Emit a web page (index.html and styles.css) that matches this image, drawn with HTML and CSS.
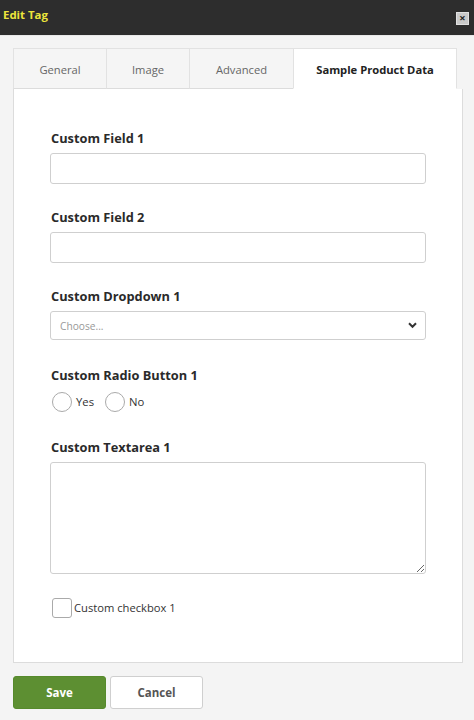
FILE: index.html
```html
<!DOCTYPE html>
<html>
<head>
<meta charset="utf-8">
<link rel="stylesheet" href="styles.css">
</head>
<body>
<div class="header">
  <span class="title">Edit Tag</span>
  <span class="close">&times;</span>
</div>
<div class="main">
  <div class="tabs">
    <div class="tab t1">General</div>
    <div class="tab t2">Image</div>
    <div class="tab t3">Advanced</div>
    <div class="tab t4 active">Sample Product Data</div>
  </div>
  <div class="panel">
    <label class="lbl">Custom Field 1</label>
    <input class="field" type="text">
    <label class="lbl">Custom Field 2</label>
    <input class="field" type="text">
    <label class="lbl">Custom Dropdown 1</label>
    <div class="select">
      <span class="placeholder">Choose...</span>
      <svg class="chev" width="9" height="7" viewBox="0 0 9 7"><path d="M1 1.3 L4.5 4.8 L8 1.3" fill="none" stroke="#333" stroke-width="2"/></svg>
    </div>
    <label class="lbl">Custom Radio Button 1</label>
    <div class="radios">
      <span class="radio"></span><span class="rtext">Yes</span>
      <span class="radio"></span><span class="rtext">No</span>
    </div>
    <label class="lbl">Custom Textarea 1</label>
    <textarea class="area"></textarea>
    <div class="check">
      <span class="box"></span><span class="ctext">Custom checkbox 1</span>
    </div>
  </div>
  <div class="buttons">
    <button class="btn save">Save</button>
    <button class="btn cancel">Cancel</button>
  </div>
</div>
</body>
</html>
```
FILE: styles.css
```css
* { box-sizing: border-box; }
html, body { margin: 0; padding: 0; }
body {
  background: #f4f4f4;
  font-family: "Open Sans", "Noto Sans", sans-serif;
  width: 474px;
  height: 720px;
  overflow: hidden;
}
.header {
  height: 36px;
  background: #2d2d2d;
  display: flex;
  align-items: center;
  justify-content: space-between;
  padding: 0 5px 0 3px;
  border-bottom: 1px solid #e8e8e8;
}
.title {
  color: #ece53c;
  font-size: 11.4px;
  font-weight: 700;
  margin-top: -6px;
}
.close {
  width: 13px;
  height: 13px;
  background: #c9c9c9;
  border: 1px solid #e0e0e0;
  color: #222;
  font-size: 11px;
  font-weight: 700;
  line-height: 10px;
  text-align: center;
  margin-top: 2px;
}
.main {
  padding: 12px 11px 0 13px;
}
.tabs {
  display: flex;
  height: 41px;
}
.tab {
  height: 41px;
  border: 1px solid #e2e2e2;
  border-right: none;
  border-bottom: 1px solid #dcdcdc;
  background: #f5f5f5;
  color: #666;
  font-size: 11.2px;
  display: flex;
  align-items: center;
  justify-content: center;
  padding-top: 1px;
}
.t1 { width: 93px; }
.t2 { width: 83px; }
.t3 { width: 104px; }
.t4 { width: 164px; border-right: 1px solid #e2e2e2; }
.tab.active {
  background: #fff;
  color: #222;
  font-weight: 700;
  border-bottom: 1px solid #fff;
}
.panel {
  background: #fff;
  border: 1px solid #dcdcdc;
  border-top: none;
  height: 574px;
  padding: 40px 36px 0 36px;
  display: flex;
  flex-direction: column;
  align-items: stretch;
}
.lbl {
  font-size: 12.8px;
  font-weight: 700;
  color: #2a2a2a;
  line-height: 18px;
  margin-bottom: 6px;
  padding-left: 1px;
}
.field {
  height: 31px;
  border: 1px solid #cfcfcf;
  border-radius: 3px;
  margin: 0 0 24px 0;
  padding: 0 8px;
  font-family: inherit;
  background: #fff;
}
.select {
  height: 29px;
  border: 1px solid #cfcfcf;
  border-radius: 3px;
  display: flex;
  align-items: center;
  justify-content: space-between;
  padding: 0 8px 0 9px;
  margin-bottom: 26px;
}
.placeholder {
  color: #999;
  font-size: 10.2px;
}
.chev { display: block; }
.radios {
  display: flex;
  align-items: center;
  margin-top: 1px;
  margin-bottom: 26px;
  padding-left: 2px;
  height: 21px;
}
.radio {
  width: 20px;
  height: 20px;
  border: 1.5px solid #aaa;
  border-radius: 50%;
  background: #fff;
}
.rtext {
  font-size: 11.3px;
  color: #333;
  margin-left: 4px;
  margin-right: 11px;
}
.area {
  height: 112px;
  border: 1px solid #cfcfcf;
  border-radius: 3px;
  margin: 0 0 23px 0;
  font-family: inherit;
  resize: both;
}
.check {
  display: flex;
  align-items: center;
  padding-left: 2px;
  height: 21px;
}
.box {
  width: 20px;
  height: 20px;
  border: 1.5px solid #aaa;
  border-radius: 3px;
  background: #fff;
}
.ctext {
  font-size: 11.2px;
  color: #333;
  margin-left: 2px;
}
.buttons {
  display: flex;
  gap: 4px;
  margin-top: 13px;
}
.btn {
  width: 93px;
  height: 33px;
  border-radius: 3px;
  font-family: inherit;
  font-size: 11.5px;
  font-weight: 700;
  cursor: pointer;
}
.save {
  background: #5d8f32;
  border: 1px solid #568a2c;
  color: #fff;
}
.cancel {
  background: #fff;
  border: 1px solid #cfcfcf;
  color: #555;
}
```
